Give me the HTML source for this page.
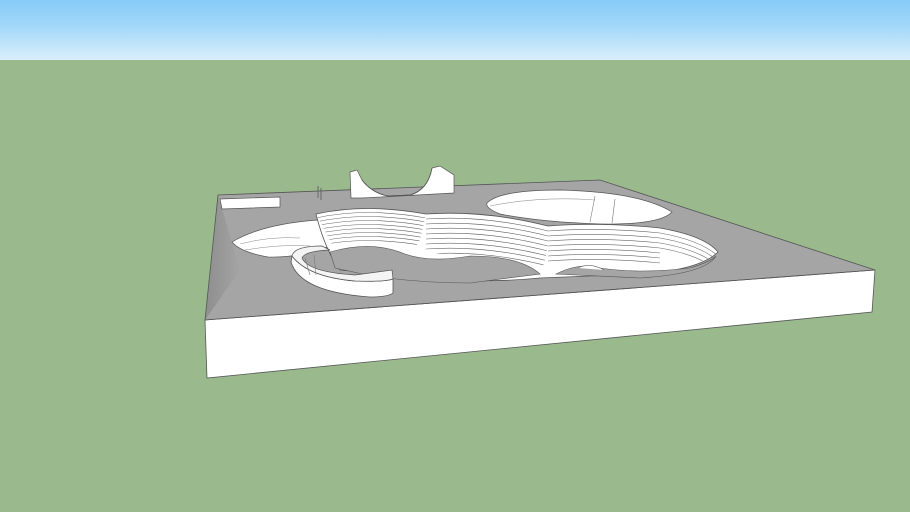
<!DOCTYPE html>
<html><head><meta charset="utf-8"><style>
html,body{margin:0;padding:0;width:910px;height:512px;overflow:hidden;background:#9aba8e}
svg{display:block}
</style></head><body>
<svg width="910" height="512" viewBox="0 0 910 512" xmlns="http://www.w3.org/2000/svg">
<defs>
<linearGradient id="sky" x1="0" y1="0" x2="0" y2="1">
<stop offset="0" stop-color="#86cbf8"/><stop offset="0.45" stop-color="#a4d8f9"/><stop offset="1" stop-color="#dcf0fc"/>
</linearGradient>
<linearGradient id="side" x1="0" y1="0" x2="1" y2="0">
<stop offset="0" stop-color="#8e8e8e"/><stop offset="1" stop-color="#a4a4a4"/>
</linearGradient>
<clipPath id="w1"><path d="M316,214 Q365,203 426,214 L420,240 Q410,256 400,255 Q370,240 335,250 Z"/></clipPath>
<clipPath id="w2"><path d="M426,214 Q485,210 548,226 Q550,250 540,275 Q510,260 470,256 Q440,255 420,250 Z"/></clipPath>
<clipPath id="w3"><path d="M548,226 Q600,222 660,228 Q705,236 718,252 Q700,268 640,272 Q590,270 560,266 L545,272 Z"/></clipPath>
</defs>
<rect x="0" y="0" width="910" height="61" fill="url(#sky)"/>
<rect x="0" y="60" width="910" height="452" fill="#9aba8e"/>
<!-- slab -->
<path d="M218,195 L600,180 L875,270 L205,320 Z" fill="#a5a5a5"/>
<path d="M218,195 L205,320 L240,270 Z" fill="url(#side)"/>
<path d="M205,320 L875,270 L872,312 L207,378 Z" fill="#ffffff" stroke="#555" stroke-width="0.8"/>
<path d="M218,195 L600,180 L875,270 L205,320 Z" fill="none" stroke="#555" stroke-width="0.8"/>
<!-- back items -->
<path d="M220,199 L280,197 L280,207 L222,209 Z" fill="#fff" stroke="#555" stroke-width="0.7"/>
<line x1="318" y1="186" x2="318" y2="198" stroke="#666"/><line x1="321" y1="188" x2="321" y2="200" stroke="#666"/>
<path d="M350,172 L357,170 L362,180 Q372,193 388,196 L410,195 Q428,190 432,168 L440,166 L454,175 L454,193 L362,198 L351,198 Z" fill="#fff" stroke="#555" stroke-width="0.7"/>
<path d="M362,180 Q372,193 388,196 L410,195 Q428,190 432,168" fill="none" stroke="#555" stroke-width="0.7"/>
<!-- back bowl -->
<path d="M487,203 Q500,190 560,190 Q640,192 672,212 Q660,225 600,224 Q540,222 500,214 Q485,208 487,203 Z" fill="#fff" stroke="#555" stroke-width="0.7"/>
<path d="M490,206 Q540,196 595,200" fill="none" stroke="#999" stroke-width="0.6"/>
<line x1="595" y1="196" x2="590" y2="222" stroke="#777" stroke-width="0.6"/>
<line x1="615" y1="199" x2="612" y2="223" stroke="#777" stroke-width="0.6"/>
<!-- left bowl -->
<path d="M232,242 Q262,224 318,220 L330,246 Q300,258 268,257 Q240,252 232,242 Z" fill="#fff" stroke="#555" stroke-width="0.7"/>
<path d="M240,244 Q270,236 300,238 M245,250 Q280,244 310,246" stroke="#888" stroke-width="0.5" fill="none"/>
<!-- main snake walls -->
<path d="M316,214 Q365,203 426,214 Q485,210 548,226 Q600,222 660,228 Q705,236 718,252 Q700,270 640,274 L540,278 Q500,282 460,280 L340,270 Q325,250 316,214 Z" fill="#fff" stroke="#555" stroke-width="0.8"/>
<g stroke="#666" stroke-width="0.6" fill="none">
<g clip-path="url(#w1)">
<path d="M316,218 Q365,207 426,218"/><path d="M316,222 Q365,211 426,222"/><path d="M316,226 Q365,215 426,226"/><path d="M316,230 Q365,219 426,230"/><path d="M316,234 Q365,223 426,234"/><path d="M316,238 Q365,227 426,238"/><path d="M316,242 Q365,231 426,242"/><path d="M316,246 Q365,235 426,246"/>
</g>
<g clip-path="url(#w2)">
<path d="M426,219 Q485,215 548,231"/><path d="M426,224 Q485,220 548,236"/><path d="M426,229 Q485,225 548,241"/><path d="M426,234 Q485,230 548,246"/><path d="M426,239 Q485,235 548,251"/><path d="M426,244 Q485,240 548,256"/><path d="M426,249 Q485,245 548,261"/><path d="M426,254 Q485,250 548,266"/>
</g>
<g clip-path="url(#w3)">
<path d="M548,231 Q600,227 660,233 Q700,240 718,256"/><path d="M548,236 Q600,232 660,238 Q700,245 718,261"/><path d="M548,241 Q600,237 660,243 Q700,250 718,266"/><path d="M548,246 Q600,242 660,248 Q700,255 718,271"/><path d="M548,251 Q600,247 660,253"/><path d="M548,256 Q600,252 660,258"/><path d="M548,261 Q600,257 660,263"/>
</g>
</g>
<!-- floors -->
<path d="M330,252 Q372,240 405,254 Q430,263 470,256 Q520,256 540,274 L470,283 Q420,283 372,276 L335,268 Z" fill="#a5a5a5" stroke="#555" stroke-width="0.6"/>
<path d="M556,274 Q580,262 600,268 Q640,274 690,268 Q710,262 716,256 Q705,274 640,278 Z" fill="#a5a5a5" stroke="#555" stroke-width="0.6"/>
<path d="M578,268 Q590,262 604,270" fill="#fff" stroke="#666" stroke-width="0.6"/>
<!-- C wall -->
<path d="M291,262 Q300,292 370,297 Q388,297 393,293 L393,279 Q385,282 355,281 Q308,277 292,256 Z" fill="#fff" stroke="#555" stroke-width="0.8"/>
<path d="M292,256 Q294,246 322,246 L330,250 Q305,251 302,258 Q308,272 355,275 L392,270 L393,279 Q385,282 355,281 Q308,277 292,256 Z" fill="#f4f4f4" stroke="#555" stroke-width="0.7"/>
<path d="M305,258 L310,275 M314,255 L316,275" stroke="#777" stroke-width="0.6"/>
</svg>
</body></html>
